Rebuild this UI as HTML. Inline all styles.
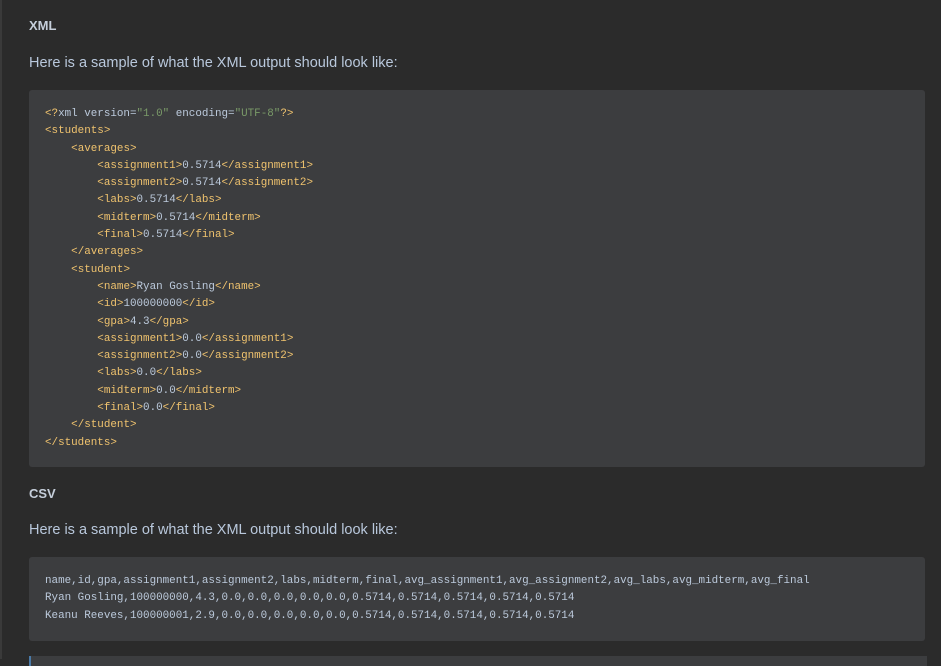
<!DOCTYPE html>
<html><head><meta charset="utf-8"><style>
html,body{margin:0;padding:0}
body{width:941px;height:659px;overflow:hidden;background:#2b2b2b;font-family:"Liberation Sans",sans-serif;position:relative}
.edge{position:absolute;left:0;top:0;width:2px;height:659px;background:#3a3a3a}
h4{position:absolute;left:29px;margin:0;font-size:13px;font-weight:bold;color:#c6cfdb}
p{position:absolute;left:29px;margin:0;font-size:14.5px;color:#b9c8dc}
pre{position:absolute;left:29px;width:896px;margin:0;background:#3c3d3f;border-radius:3px;font-family:"Liberation Mono",monospace;font-size:10.9px;line-height:17.3px;color:#bccadc;padding:0 0 0 16px;box-sizing:border-box}
.t{color:#f0c36e}.s{color:#7a9a68}
.bot{position:absolute;left:29px;top:656px;width:896px;height:10px;background:#3c3d3f;border-left:2px solid #4a7aa8}
</style></head><body>
<div class="edge"></div>
<h4 style="top:18px">XML</h4>
<p style="top:55px">Here is a sample of what the XML output should look like:</p>
<pre style="top:90px;height:377px;padding-top:16px"><span class="t">&lt;?</span>xml version=<span class="s">"1.0"</span> encoding=<span class="s">"UTF-8"</span><span class="t">?&gt;</span>
<span class="t">&lt;students&gt;</span>
    <span class="t">&lt;averages&gt;</span>
        <span class="t">&lt;assignment1&gt;</span>0.5714<span class="t">&lt;/assignment1&gt;</span>
        <span class="t">&lt;assignment2&gt;</span>0.5714<span class="t">&lt;/assignment2&gt;</span>
        <span class="t">&lt;labs&gt;</span>0.5714<span class="t">&lt;/labs&gt;</span>
        <span class="t">&lt;midterm&gt;</span>0.5714<span class="t">&lt;/midterm&gt;</span>
        <span class="t">&lt;final&gt;</span>0.5714<span class="t">&lt;/final&gt;</span>
    <span class="t">&lt;/averages&gt;</span>
    <span class="t">&lt;student&gt;</span>
        <span class="t">&lt;name&gt;</span>Ryan Gosling<span class="t">&lt;/name&gt;</span>
        <span class="t">&lt;id&gt;</span>100000000<span class="t">&lt;/id&gt;</span>
        <span class="t">&lt;gpa&gt;</span>4.3<span class="t">&lt;/gpa&gt;</span>
        <span class="t">&lt;assignment1&gt;</span>0.0<span class="t">&lt;/assignment1&gt;</span>
        <span class="t">&lt;assignment2&gt;</span>0.0<span class="t">&lt;/assignment2&gt;</span>
        <span class="t">&lt;labs&gt;</span>0.0<span class="t">&lt;/labs&gt;</span>
        <span class="t">&lt;midterm&gt;</span>0.0<span class="t">&lt;/midterm&gt;</span>
        <span class="t">&lt;final&gt;</span>0.0<span class="t">&lt;/final&gt;</span>
    <span class="t">&lt;/student&gt;</span>
<span class="t">&lt;/students&gt;</span></pre>
<h4 style="top:486px">CSV</h4>
<p style="top:522px">Here is a sample of what the XML output should look like:</p>
<pre style="top:557px;height:84px;padding-top:16px">name,id,gpa,assignment1,assignment2,labs,midterm,final,avg_assignment1,avg_assignment2,avg_labs,avg_midterm,avg_final
Ryan Gosling,100000000,4.3,0.0,0.0,0.0,0.0,0.0,0.5714,0.5714,0.5714,0.5714,0.5714
Keanu Reeves,100000001,2.9,0.0,0.0,0.0,0.0,0.0,0.5714,0.5714,0.5714,0.5714,0.5714</pre>
<div class="bot"></div>
</body></html>
